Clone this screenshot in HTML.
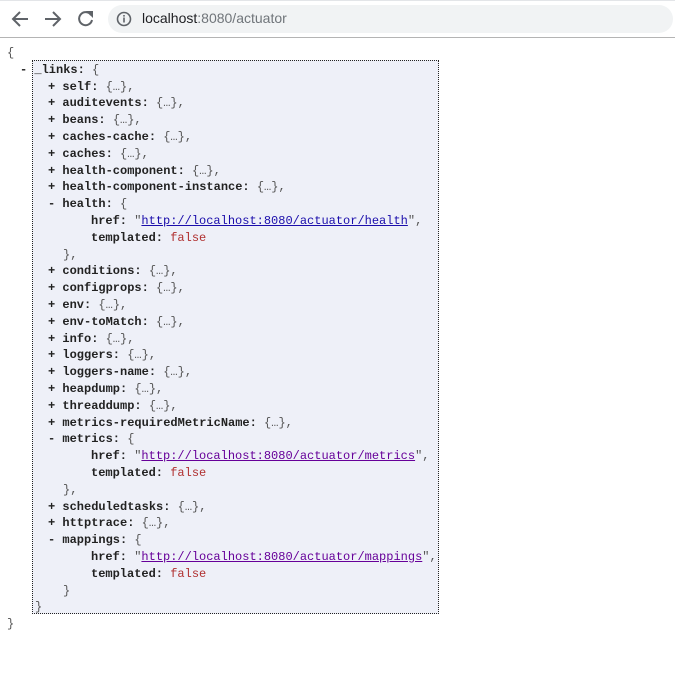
<!DOCTYPE html>
<html><head><meta charset="utf-8"><style>
html,body{margin:0;padding:0;background:#fff;width:675px;height:674px;overflow:hidden}
.bar{position:absolute;left:0;top:0;width:675px;height:37px;background:#fff;border-top:1px solid #e3e5e8;box-sizing:border-box}
.line{position:absolute;left:0;top:37px;width:675px;height:1px;background:#b4b4b4}
.pill{position:absolute;left:108px;top:5px;width:565px;height:28px;border-radius:14px;background:#f1f3f4}
.url{position:absolute;left:142px;top:10px;font:14px "Liberation Sans",sans-serif;color:#202124}
.url span{color:#70757a}
.code{position:absolute;left:0;top:45px;font:bold 12px/16.8px "Liberation Mono",monospace;color:#222}
.box{position:absolute;left:32px;top:60px;width:407px;height:554px;background:#eef0f8;border:1px dotted #222;box-sizing:border-box}
.r{position:absolute;white-space:pre}
.p{color:#555;font-weight:normal}
a{color:#1a0dab;font-weight:normal;text-decoration:underline}
a.v{color:#660099}
.f{color:#b03030;font-weight:normal}
</style></head><body>
<div class="bar"></div>
<div class="pill"></div>
<svg style="position:absolute;left:0;top:0" width="140" height="37">
<g stroke="#5f6368" stroke-width="2" fill="none">
<path d="M28 19H13M20 12l-7 7 7 7"/>
<path d="M45 19h15M53 12l7 7-7 7"/>
<path d="M91 15a6.5 6.5 0 1 0 1 5"/>
</g>
<path d="M86 11l7 0 0 7z" fill="#5f6368"/>
<circle cx="124" cy="19" r="6.5" stroke="#5f6368" stroke-width="1.6" fill="none"/>
<rect x="123.2" y="17.5" width="1.6" height="5" fill="#5f6368"/><rect x="123.2" y="15" width="1.6" height="1.6" fill="#5f6368"/>
</svg>
<div class="url">localhost<span>:8080/actuator</span></div>
<div class="line"></div>
<div class="box"></div>
<div class="code">
<div class="r" style="left:7px;top:0"><span class="p">{</span></div>
<div class="r" style="left:20px;top:16.8px">- _links: <span class="p">{</span></div>
<div class="r" style="left:48px;top:33.6px">+ self: <span class="p">{…},</span></div>
<div class="r" style="left:48px;top:50.4px">+ auditevents: <span class="p">{…},</span></div>
<div class="r" style="left:48px;top:67.2px">+ beans: <span class="p">{…},</span></div>
<div class="r" style="left:48px;top:84px">+ caches-cache: <span class="p">{…},</span></div>
<div class="r" style="left:48px;top:100.8px">+ caches: <span class="p">{…},</span></div>
<div class="r" style="left:48px;top:117.6px">+ health-component: <span class="p">{…},</span></div>
<div class="r" style="left:48px;top:134.4px">+ health-component-instance: <span class="p">{…},</span></div>
<div class="r" style="left:48px;top:151.2px">- health: <span class="p">{</span></div>
<div class="r" style="left:91px;top:168px">href: <span class="p">"</span><a>http://localhost:8080/actuator/health</a><span class="p">",</span></div>
<div class="r" style="left:91px;top:184.8px">templated: <span class="f">false</span></div>
<div class="r" style="left:63px;top:201.6px"><span class="p">},</span></div>
<div class="r" style="left:48px;top:218.4px">+ conditions: <span class="p">{…},</span></div>
<div class="r" style="left:48px;top:235.2px">+ configprops: <span class="p">{…},</span></div>
<div class="r" style="left:48px;top:252px">+ env: <span class="p">{…},</span></div>
<div class="r" style="left:48px;top:268.8px">+ env-toMatch: <span class="p">{…},</span></div>
<div class="r" style="left:48px;top:285.6px">+ info: <span class="p">{…},</span></div>
<div class="r" style="left:48px;top:302.4px">+ loggers: <span class="p">{…},</span></div>
<div class="r" style="left:48px;top:319.2px">+ loggers-name: <span class="p">{…},</span></div>
<div class="r" style="left:48px;top:336px">+ heapdump: <span class="p">{…},</span></div>
<div class="r" style="left:48px;top:352.8px">+ threaddump: <span class="p">{…},</span></div>
<div class="r" style="left:48px;top:369.6px">+ metrics-requiredMetricName: <span class="p">{…},</span></div>
<div class="r" style="left:48px;top:386.4px">- metrics: <span class="p">{</span></div>
<div class="r" style="left:91px;top:403.2px">href: <span class="p">"</span><a class="v">http://localhost:8080/actuator/metrics</a><span class="p">",</span></div>
<div class="r" style="left:91px;top:420px">templated: <span class="f">false</span></div>
<div class="r" style="left:63px;top:436.8px"><span class="p">},</span></div>
<div class="r" style="left:48px;top:453.6px">+ scheduledtasks: <span class="p">{…},</span></div>
<div class="r" style="left:48px;top:470.4px">+ httptrace: <span class="p">{…},</span></div>
<div class="r" style="left:48px;top:487.2px">- mappings: <span class="p">{</span></div>
<div class="r" style="left:91px;top:504px">href: <span class="p">"</span><a class="v">http://localhost:8080/actuator/mappings</a><span class="p">",</span></div>
<div class="r" style="left:91px;top:520.8px">templated: <span class="f">false</span></div>
<div class="r" style="left:63px;top:537.6px"><span class="p">}</span></div>
<div class="r" style="left:35px;top:554.4px"><span class="p">}</span></div>
<div class="r" style="left:7px;top:571.2px"><span class="p">}</span></div>
</div>
</body></html>
